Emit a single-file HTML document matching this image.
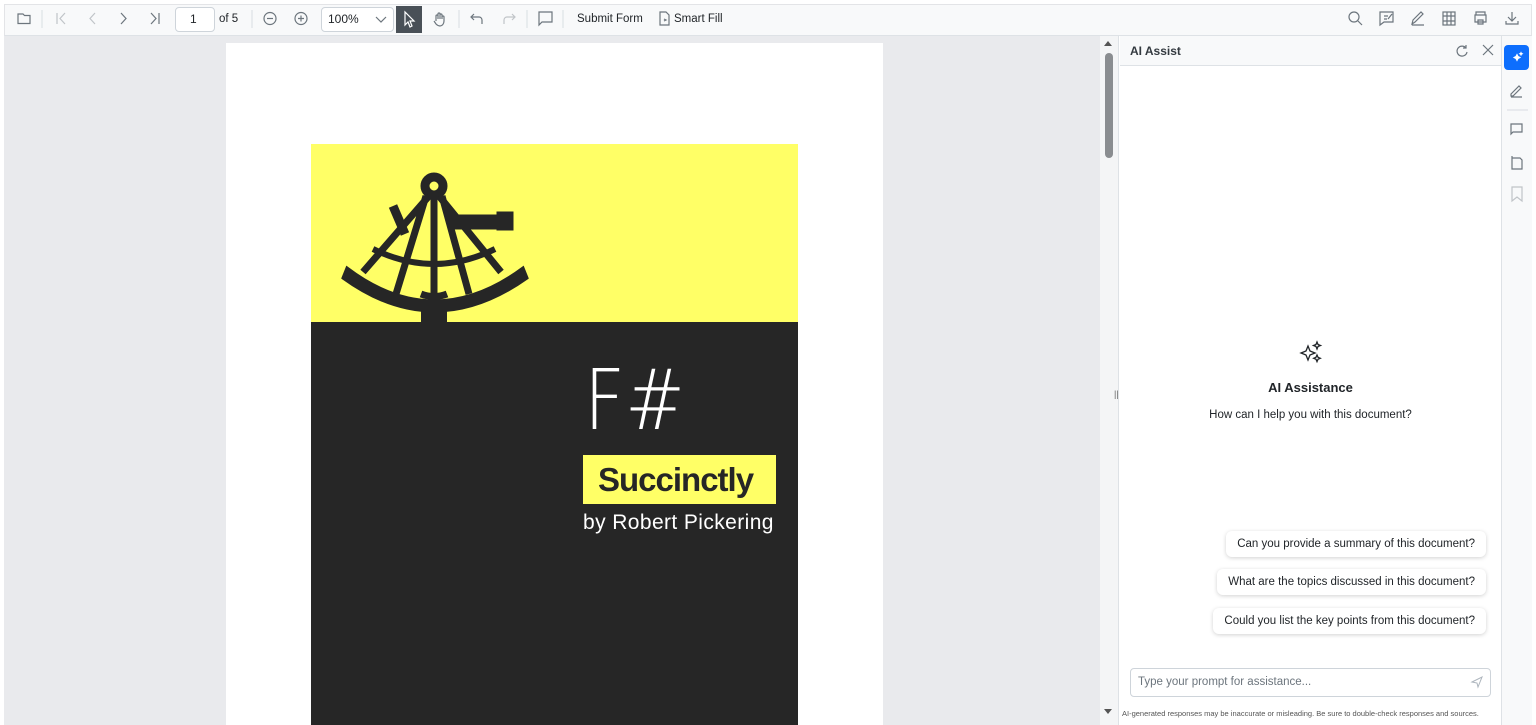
<!DOCTYPE html>
<html><head><style>
*{box-sizing:border-box;margin:0;padding:0}
body{width:1536px;height:725px;overflow:hidden;background:#fff;font-family:"Liberation Sans",sans-serif;position:relative;color:#212529}
.abs{position:absolute}
.tb{left:4px;top:4px;width:1528px;height:32px;background:#f8f9fa;border:1px solid #e3e4e7;border-bottom:1px solid #dee2e6}
.t{font-size:11.5px;color:#212529;position:absolute;top:13px}
.sug{position:absolute;right:50px;height:26px;background:#fff;border-radius:6px;box-shadow:0 1px 4px rgba(0,0,0,.18);font-size:11.5px;padding:0 11px;line-height:26px;color:#212529}
</style></head><body>
<div class="abs tb"></div>
<svg class="abs" style="left:0;top:0" width="1536" height="36" fill="none" stroke="#6c757d" stroke-width="1.2">
<path d="M18 14h5l1.5 1.5H30v8H18z"/>
<line x1="42" y1="10" x2="42" y2="28" stroke="#dee2e6"/>
<path d="M57 13v11M65 13l-5 5.5 5 5.5" stroke="#c0c4c8"/>
<path d="M95 13l-5 5.5 5 5.5" stroke="#c0c4c8"/>
<path d="M121 13l5 5.5-5 5.5"/>
<path d="M151 13l5 5.5-5 5.5M159 13v11"/>
<line x1="252" y1="10" x2="252" y2="28" stroke="#dee2e6"/>
<circle cx="270" cy="18.5" r="6"/><path d="M267 18.5h6"/>
<circle cx="301" cy="18.5" r="6"/><path d="M298 18.5h6M301 15.5v6"/>
<path d="M436 21v-5a1 1 0 012 0v3-5a1 1 0 012 0v5-4a1 1 0 012 0v4-2a1 1 0 012 0v4c0 3-2 5-4 5s-3-1-4-2l-2-3"/>
<line x1="459" y1="10" x2="459" y2="28" stroke="#dee2e6"/>
<path d="M472 17h7a3 3 0 013 3v4M474 14l-3 3 3 3"/>
<path d="M514 17h-7a3 3 0 00-3 3v4M512 14l3 3-3 3" stroke="#c0c4c8"/>
<line x1="527" y1="10" x2="527" y2="28" stroke="#dee2e6"/>
<path d="M539 12h13v10h-10l-3 3z"/>
<line x1="563" y1="10" x2="563" y2="28" stroke="#dee2e6"/>
<path d="M660 12h6l3 3v10h-9zM664 19l2 1-2 1"/>
<circle cx="1354" cy="17" r="5"/><path d="M1358 21l4 4"/>
<path d="M1380 12h13v10h-9l-4 3z M1384 19h3M1384 16h4M1388 19l4-5"/>
<path d="M1412 24l1-4 8-8 2 2-8 8zM1412 25h12"/>
<rect x="1443" y="12" width="12" height="13"/><path d="M1447 12v13M1451 12v13M1443 16h12M1443 21h12"/>
<path d="M1476 15v-3h9v3M1475 15h11v7h-11zM1478 20h5v4h-5z"/>
<path d="M1512 12v9M1508 17l4 4 4-4M1506 21v3h12v-3"/>
</svg>
<div class="abs" style="left:175px;top:7px;width:40px;height:25px;background:#fff;border:1px solid #ced4da;border-radius:4px;font-size:12px;line-height:23px;padding-left:14px">1</div>
<div class="t" style="left:219px">of 5</div>
<div class="abs" style="left:321px;top:7px;width:73px;height:25px;border:1px solid #ced4da;border-radius:4px;background:#fff;font-size:12px;line-height:23px;padding-left:6px">100%</div>
<svg class="abs" style="left:396px;top:6px" width="26" height="27"><rect width="26" height="27" fill="#495057"/><path d="M9 6v13l3-3 2 5 2-1-2-5h4z" fill="none" stroke="#fff" stroke-width="1.2"/></svg>
<svg class="abs" style="left:372px;top:6px" width="20" height="26"><path d="M4 11l5 5 5-5" fill="none" stroke="#6c757d" stroke-width="1.2"/></svg>
<div class="t" style="left:577px">Submit Form</div>
<div class="t" style="left:674px">Smart Fill</div>

<div class="abs" style="left:4px;top:36px;width:1096px;height:689px;background:#e9eaed"></div>
<div class="abs" style="left:226px;top:43px;width:657px;height:682px;background:#fff"></div>
<div class="abs" style="left:311px;top:144px;width:487px;height:178px;background:#ffff66"></div>
<div class="abs" style="left:311px;top:322px;width:487px;height:403px;background:#262626"></div>
<svg class="abs" style="left:311px;top:144px" width="487" height="180">
<g fill="#262626" stroke="#262626">
<circle cx="123" cy="42" r="9" fill="none" stroke-width="9"/>
<path d="M36 124 Q123 190 212 124 L216 134 Q123 200 32 134Z" stroke-width="3"/>
<path d="M115 52 L85 150 M131 52 L158 150 M123 52 V178 M118 52 L52 128 M128 52 L190 128 M110 150 Q123 155 136 150" stroke-width="7" fill="none"/>
<path d="M62 105 Q123 135 184 105" stroke-width="6" fill="none"/>
<path d="M82 62 L94 90" stroke-width="9"/>
<rect x="140" y="71" width="48" height="14" stroke-width="1"/>
<rect x="186" y="68" width="16" height="18" stroke-width="1"/>
<rect x="110" y="160" width="26" height="20" stroke-width="0"/>
</g></svg>
<div class="abs" style="left:584px;top:355px;font-size:84px;color:#fff;font-weight:300;line-height:90px;font-family:'DejaVu Sans',sans-serif;transform:scaleX(.85);transform-origin:left">F#</div>
<div class="abs" style="left:583px;top:455px;width:193px;height:49px;background:#ffff66;font-size:33px;font-weight:bold;letter-spacing:-1px;line-height:49px;padding-left:15px;color:#262626">Succinctly</div>
<div class="abs" style="left:583px;top:511px;font-size:21px;color:#fff;letter-spacing:.4px">by Robert Pickering</div>

<div class="abs" style="left:1100px;top:36px;width:19px;height:689px;background:#f4f5f6;border-right:1px solid #dee2e6"></div>
<div class="abs" style="left:1105px;top:53px;width:8px;height:105px;background:#8a8d90;border-radius:4px"></div>
<div class="abs" style="left:1104px;top:41px;width:0;height:0;border:4px solid transparent;border-bottom:5px solid #555;border-top:0"></div>
<div class="abs" style="left:1104px;top:709px;width:0;height:0;border:4px solid transparent;border-top:5px solid #555;border-bottom:0"></div>
<div class="abs" style="left:1114px;top:389px;font-size:9px;color:#666">||</div>
<div class="abs" style="left:1120px;top:36px;width:381px;height:30px;background:#f8f9fa;border-bottom:1px solid #dee2e6"></div>
<div class="abs" style="left:1130px;top:44px;font-size:12px;font-weight:bold;color:#343a40">AI Assist</div>
<svg class="abs" style="left:1450px;top:40px" width="50" height="22" fill="none" stroke="#6c757d" stroke-width="1.2"><path d="M16 8a5 5 0 1 0 1 4M16 5v3h-3"/><path d="M33 5l10 10M43 5l-10 10"/></svg>
<div class="abs" style="left:1501px;top:36px;width:31px;height:689px;background:#f8f9fa;border-left:1px solid #dee2e6"></div>
<div class="abs" style="left:1504px;top:45px;width:25px;height:25px;background:#0d6efd;border-radius:4px"></div>
<svg class="abs" style="left:1500px;top:40px" width="36" height="180" fill="none" stroke="#6c757d" stroke-width="1.2">
<path d="M17 14l1.2 2.3 2.3 1.2-2.3 1.2L17 21l-1.2-2.3-2.3-1.2 2.3-1.2z M21 12l.6 1.2 1.2.6-1.2.6-.6 1.2-.6-1.2-1.2-.6 1.2-.6z" fill="#fff" stroke="#fff" stroke-width=".6"/>
<path d="M11 54l8-8 2 2-8 8h-2zM11 57h11"/>
<line x1="7" y1="70" x2="28" y2="70" stroke="#dee2e6"/>
<path d="M11 84h11v8h-9l-2 2z"/>
<path d="M12 118h8l2 2v9h-10z M12 118v-2"/>
<path d="M12 147h10v14l-5-4-5 4z" stroke="#c0c4c8"/>
</svg>
<svg class="abs" style="left:1299px;top:339px" width="26" height="26" fill="none" stroke="#212529" stroke-width="1.3"><path d="M9 7l2 5 5 2-5 2-2 5-2-5-5-2 5-2z M18 3l1 2.5 2.5 1-2.5 1-1 2.5-1-2.5-2.5-1 2.5-1z M18 16l1 2.3 2.3 1-2.3 1-1 2.3-1-2.3-2.3-1 2.3-1z"/></svg>
<div class="abs" style="left:1120px;top:380px;width:381px;text-align:center;font-size:13px;font-weight:bold">AI Assistance</div>
<div class="abs" style="left:1120px;top:409px;width:381px;text-align:center;font-size:11.5px">How can I help you with this document?</div>
<div class="sug" style="top:531px;right:50px">Can you provide a summary of this document?</div>
<div class="sug" style="top:569px">What are the topics discussed in this document?</div>
<div class="sug" style="top:608px">Could you list the key points from this document?</div>
<div class="abs" style="left:1130px;top:668px;width:361px;height:29px;border:1px solid #ced4da;border-radius:4px;background:#fff;font-size:11.5px;color:#6c757d;line-height:27px;padding-left:7px">Type your prompt for assistance...</div>
<svg class="abs" style="left:1470px;top:675px" width="14" height="14" fill="none" stroke="#adb5bd"><path d="M2 7l10-5-4 10-1-4z"/></svg>
<div class="abs" style="left:1122px;top:709px;font-size:7.5px;color:#555">AI-generated responses may be inaccurate or misleading. Be sure to double-check responses and sources.</div>
</body></html>
